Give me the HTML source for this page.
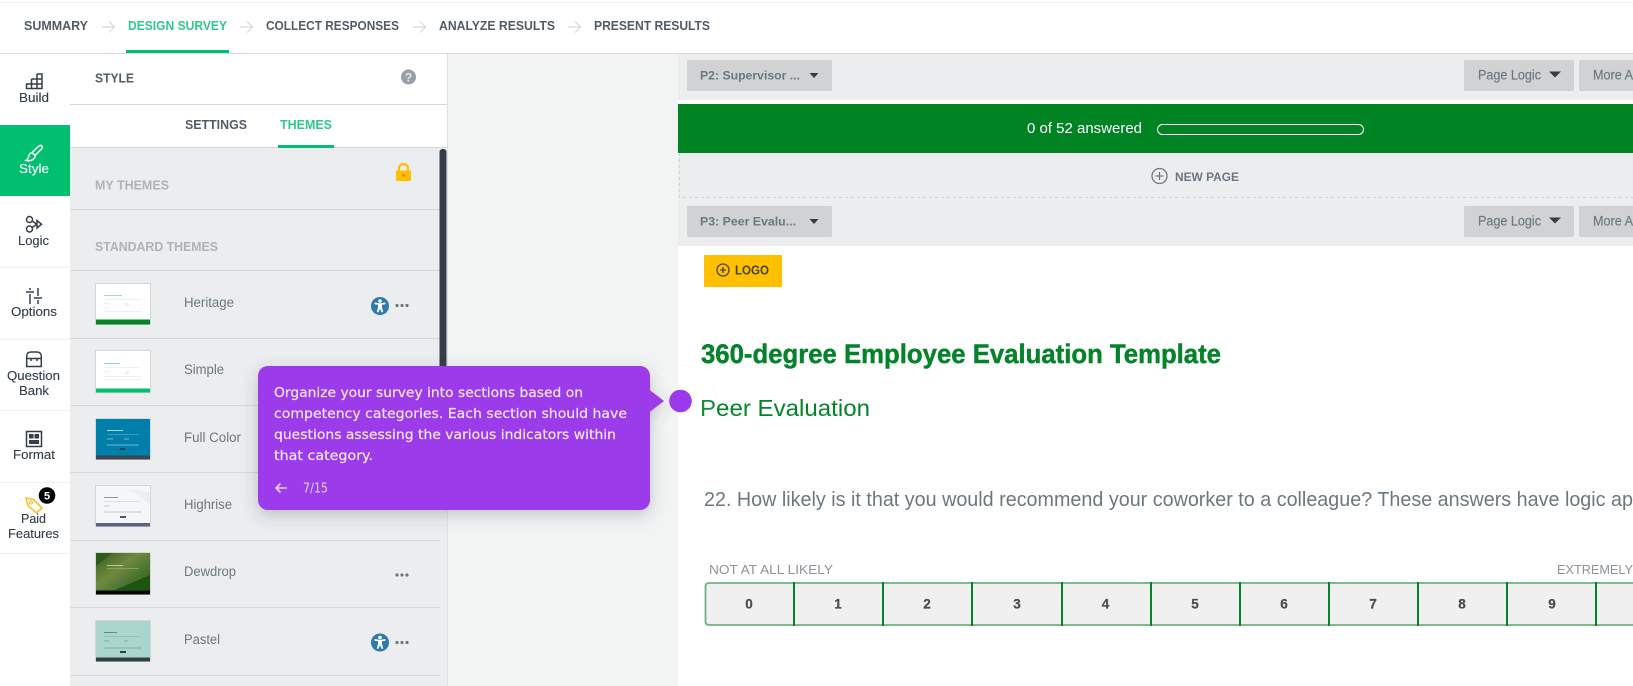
<!DOCTYPE html>
<html lang="en"><head><meta charset="utf-8"><title>Design Survey</title>
<style>
html,body{margin:0;padding:0;width:1633px;height:686px;overflow:hidden;background:#fff}
svg{display:block;filter:blur(.3px)}
text{font-family:"Liberation Sans",sans-serif}
.nav{font-size:13px;font-weight:700;fill:#515c66}
.g{fill:#2fc98a}
.side{font-size:12.5px;fill:#333e48;stroke:#333e48;stroke-width:.12}
.sec{font-size:13px;font-weight:700;fill:#b0b3b6}
.name{font-size:13.5px;fill:#6b787f}
.btn{font-size:12px;font-weight:700;fill:#6b787f}
.btn2{font-size:13.5px;fill:#6b787f;stroke:#6b787f;stroke-width:.15}
.tip{font-family:"DejaVu Sans",sans-serif;font-size:13px;fill:#f3e9fc;stroke:#f3e9fc;stroke-width:.18}
.num{font-size:13.5px;font-weight:700;fill:#4b4f52;text-anchor:middle;stroke:#4b4f52;stroke-width:.25}
.ic{fill:none;stroke:#333e48;stroke-width:1.5}
.arr{fill:none;stroke:#d8dada;stroke-width:1.2}
</style></head><body>
<svg width="1633" height="686" viewBox="0 0 1633 686" xmlns="http://www.w3.org/2000/svg">
<defs>
<filter id="sh" x="-15%" y="-25%" width="130%" height="160%"><feDropShadow dx="0" dy="5" stdDeviation="8" flood-color="#3a4060" flood-opacity=".28"/></filter>
<linearGradient id="dew" x1="0" y1="0" x2="1" y2="1"><stop offset="0" stop-color="#33591f"/><stop offset=".4" stop-color="#6f8a3e"/><stop offset=".7" stop-color="#44702a"/><stop offset="1" stop-color="#1f5a14"/></linearGradient>
<g id="acc"><circle r="9" fill="#2b7aab"/><circle cy="-5" r="1.8" fill="#fff"/><path d="M-5.5-2.6 0-1.8 5.5-2.6" fill="none" stroke="#fff" stroke-width="1.7"/><path d="M-2-2.200H2V1.500L3.300 6.300H1.500L0 2.500-1.500 6.300H-3.300L-2 1.500Z" fill="#fff"/></g>
<g id="dots" fill="#6b787f"><circle cx="-5" r="1.6"/><circle r="1.6"/><circle cx="5" r="1.6"/></g>
</defs>

<!-- top nav -->
<rect width="1633" height="686" fill="#fff"/>
<rect y="2" width="1633" height="1" fill="#efefef"/>
<rect y="53" width="1633" height="1" fill="#d6d8d9"/>
<text class="nav" x="24" y="30" textLength="64" lengthAdjust="spacingAndGlyphs">SUMMARY</text>
<path class="arr" d="M102 27H114M109 21.5 114.5 27 109 32.5"/>
<text class="nav g" x="128" y="30" textLength="99" lengthAdjust="spacingAndGlyphs">DESIGN SURVEY</text>
<rect x="126" y="50" width="103" height="3" fill="#00bf6f"/>
<path class="arr" d="M240 27H252M247 21.5 252.500 27 247 32.5"/>
<text class="nav" x="266" y="30" textLength="133" lengthAdjust="spacingAndGlyphs">COLLECT RESPONSES</text>
<path class="arr" d="M413 27H425M420 21.5 425.500 27 420 32.5"/>
<text class="nav" x="439" y="30" textLength="116" lengthAdjust="spacingAndGlyphs">ANALYZE RESULTS</text>
<path class="arr" d="M568 27H580M575 21.5 580.500 27 575 32.5"/>
<text class="nav" x="594" y="30" textLength="116" lengthAdjust="spacingAndGlyphs">PRESENT RESULTS</text>

<!-- backgrounds -->
<rect x="447" y="54" width="231" height="632" fill="#f2f4f4"/>
<rect x="70" y="148" width="377" height="538" fill="#ecedee"/>
<rect x="447" y="54" width="1" height="632" fill="#dfe1e2"/>
<rect x="70" y="104" width="377" height="1" fill="#d6d8d9"/>
<rect x="70" y="147" width="377" height="1" fill="#d6d8d9"/>

<!-- sidebar -->
<rect x="0" y="125" width="70" height="71" fill="#00bf6f"/>
<g fill="#f1f2f2"><rect y="267" width="70" height="1"/><rect y="339" width="70" height="1"/><rect y="410" width="70" height="1"/><rect y="482" width="70" height="1"/><rect y="553" width="70" height="1"/></g>
<path class="ic" d="M37 74H42V88.500H26.500V84H42M37 74V88.500M31.500 79H42M31.500 79V88.500M26.500 84V88.500"/>
<text class="side" x="19" y="102" textLength="30" lengthAdjust="spacingAndGlyphs">Build</text>
<path fill="none" stroke="#fff" stroke-width="1.5" d="M32 152.500 39 146Q41 144.800 42 146.200 42.800 147.500 41.500 149L35 155.500ZM32 152.500Q28.800 153.500 28.500 157 28.200 159 26 160.500 31.500 161.500 34 158.500 35.500 157 35 155.500"/>
<text class="side" x="19" y="173" textLength="30" lengthAdjust="spacingAndGlyphs" style="fill:#fff;stroke:#fff">Style</text>
<g class="ic"><circle cx="29.500" cy="219.500" r="3"/><circle cx="29.500" cy="229" r="3"/><path d="M32 221 37 224.200M32 227.500 37 224.200"/><path d="M37 220.500 41.500 224.200 37 228Z"/></g>
<text class="side" x="18" y="245" textLength="31" lengthAdjust="spacingAndGlyphs">Logic</text>
<g class="ic"><path d="M30 288V290M30 294V304M26 292H34M38 288V296M38 300V304M34 298H42"/></g>
<text class="side" x="11" y="316" textLength="46" lengthAdjust="spacingAndGlyphs">Options</text>
<g class="ic"><path d="M26.700 366.500V356.500Q26.700 352 31 352H37Q41.300 352 41.300 356.500V366.500ZM26.700 358.500H41.300M31 358.500V361M37 358.500V361"/></g>
<text class="side" x="7" y="380" textLength="53" lengthAdjust="spacingAndGlyphs">Question</text>
<text class="side" x="19" y="395" textLength="30" lengthAdjust="spacingAndGlyphs">Bank</text>
<rect class="ic" x="26.500" y="431.500" width="15" height="15"/><g fill="#333e48"><rect x="29" y="434" width="4.500" height="4.500"/><rect x="34.500" y="434" width="4.500" height="4.500"/><rect x="29" y="440" width="10" height="4"/></g>
<text class="side" x="13" y="459" textLength="42" lengthAdjust="spacingAndGlyphs">Format</text>
<path fill="none" stroke="#fdc030" stroke-width="1.6" d="M26 498 33.500 499.500 42 508 36.500 513 28 505.500Z"/><circle cx="31" cy="502.500" r="1.500" fill="none" stroke="#fdc030" stroke-width="1.200"/>
<circle cx="47" cy="495.500" r="8.300" fill="#000"/><text x="47" y="499.500" text-anchor="middle" style="font-size:11px;font-weight:700;fill:#fff">5</text>
<text class="side" x="21" y="523" textLength="25" lengthAdjust="spacingAndGlyphs">Paid</text>
<text class="side" x="8" y="538" textLength="51" lengthAdjust="spacingAndGlyphs">Features</text>

<!-- style panel -->
<text class="nav" x="95" y="82.500" textLength="39" lengthAdjust="spacingAndGlyphs" style="font-size:12.500px">STYLE</text>
<circle cx="408.500" cy="77" r="7.500" fill="#98a0a5"/><text x="408.500" y="81.500" text-anchor="middle" style="font-size:12px;font-weight:700;fill:#e8eaeb">?</text>
<text class="nav" x="185" y="129" textLength="62" lengthAdjust="spacingAndGlyphs">SETTINGS</text>
<text class="nav g" x="280" y="129" textLength="52" lengthAdjust="spacingAndGlyphs">THEMES</text>
<rect x="278" y="145" width="56" height="3" fill="#00bf6f"/>
<text class="sec" x="95" y="189.500" textLength="74" lengthAdjust="spacingAndGlyphs">MY THEMES</text>
<path d="M399 171V168.500A4.500 4.500 0 0 1 408 168.500V171" fill="none" stroke="#ffbf00" stroke-width="2.200"/><rect x="396" y="170.500" width="15" height="10.500" rx="1" fill="#ffbf00"/><circle cx="403.500" cy="175.500" r="1.300" fill="#c79500"/>
<rect x="70" y="209" width="370" height="1" fill="#d6d8d9"/>
<text class="sec" x="95" y="251" textLength="123" lengthAdjust="spacingAndGlyphs">STANDARD THEMES</text>
<g fill="#d6d8d9"><rect x="70" y="270" width="370" height="1"/><rect x="70" y="338" width="370" height="1"/><rect x="70" y="405" width="370" height="1"/><rect x="70" y="472" width="370" height="1"/><rect x="70" y="540" width="370" height="1"/><rect x="70" y="607" width="370" height="1"/><rect x="70" y="675" width="370" height="1"/></g>

<!-- thumbs -->
<g stroke="#d4d6d7" stroke-width="1">
<rect x="95.500" y="283.500" width="55" height="41" fill="#fff"/>
<rect x="95.500" y="350.500" width="55" height="42" fill="#fff"/>
<rect x="95.500" y="418.500" width="55" height="41" fill="#007faa"/>
<rect x="95.500" y="485.500" width="55" height="41" fill="#f5f6f7"/>
<rect x="95.500" y="552.500" width="55" height="42" fill="url(#dew)"/>
<rect x="95.500" y="620.500" width="55" height="41" fill="#a9d5cd"/>
</g>
<rect x="96" y="319.500" width="54" height="5" fill="#05832a"/>
<rect x="104" y="295" width="18" height="1" fill="#a8dcb6"/><g fill="#eff0f1"><rect x="104" y="299" width="36" height="1"/><rect x="104" y="303" width="6" height="1"/><rect x="104" y="307" width="6" height="1"/><rect x="125" y="303" width="4" height="3"/><rect x="104" y="311" width="38" height="1"/></g>
<rect x="96" y="388.500" width="54" height="4" fill="#00bf6f"/>
<rect x="104" y="363" width="16" height="1" fill="#8fe0bd"/><g fill="#eff0f1"><rect x="104" y="367" width="36" height="1"/><rect x="104" y="371" width="6" height="1"/><rect x="125" y="371" width="4" height="3"/><rect x="104" y="376" width="38" height="1"/><rect x="104" y="379" width="38" height="1"/></g>
<rect x="96" y="455.500" width="54" height="4" fill="#3c4650"/>
<rect x="107" y="430" width="16" height="1" fill="#a9d4e4"/><g fill="#3a9abe"><rect x="107" y="434" width="32" height="1"/><rect x="107" y="438" width="6" height="2"/><rect x="124" y="438" width="5" height="2"/><rect x="107" y="444" width="32" height="2"/></g><rect x="120" y="448" width="5" height="2" fill="#24404f"/>
<rect x="96" y="523" width="54" height="3.500" fill="#5b6484"/>
<path d="M130 489 150 492V505Z" fill="#eceef0"/><rect x="104" y="497" width="14" height="1" fill="#8d94aa"/><g fill="#dcdfe2"><rect x="104" y="501" width="36" height="1"/><rect x="104" y="505" width="5" height="2"/><rect x="104" y="511" width="38" height="2"/></g><rect x="120" y="516" width="6" height="2" fill="#4b5478"/>
<rect x="96" y="590.500" width="54" height="4" fill="#050505"/>
<path d="M96 553H112L96 566Z" fill="#2f5a1e"/><path d="M150 575V590H115Z" fill="#1c5410"/><rect x="107" y="565" width="16" height="1" fill="#b9c78f"/><rect x="107" y="568" width="32" height="1" fill="#8b9e5e"/><rect x="118" y="580" width="5" height="2" fill="#6b5a8a"/>
<rect x="96" y="657.500" width="54" height="4" fill="#333e48"/>
<rect x="104" y="632" width="13" height="1" fill="#6b8a86"/><g fill="#93c2ba"><rect x="104" y="636" width="36" height="1"/><rect x="104" y="640" width="5" height="2"/><rect x="124" y="640" width="4" height="2"/><rect x="104" y="647" width="38" height="2"/></g><rect x="120" y="651" width="6" height="2" fill="#333e48"/>

<text class="name" x="184" y="307" textLength="50" lengthAdjust="spacingAndGlyphs">Heritage</text>
<text class="name" x="184" y="374" textLength="40" lengthAdjust="spacingAndGlyphs">Simple</text>
<text class="name" x="184" y="442" textLength="57" lengthAdjust="spacingAndGlyphs">Full Color</text>
<text class="name" x="184" y="509" textLength="48" lengthAdjust="spacingAndGlyphs">Highrise</text>
<text class="name" x="184" y="576" textLength="52" lengthAdjust="spacingAndGlyphs">Dewdrop</text>
<text class="name" x="184" y="644" textLength="36" lengthAdjust="spacingAndGlyphs">Pastel</text>
<use href="#acc" x="380" y="306"/><use href="#dots" x="402" y="305.500"/>
<use href="#dots" x="402" y="575"/>
<use href="#acc" x="380" y="642.500"/><use href="#dots" x="402" y="642.500"/>

<!-- scrollbar -->
<rect x="439.500" y="149" width="7" height="225" rx="3" fill="#333e48"/>

<!-- right survey -->
<rect x="678" y="54" width="955" height="632" fill="#fff"/>
<rect x="678" y="54" width="955" height="46" fill="#ecedee"/>
<rect x="678" y="104" width="955" height="49" fill="#008323"/>
<rect x="678" y="153" width="955" height="93" fill="#ecedee"/>
<path d="M679.500 153V197.500H1633" fill="none" stroke="#d0d2d3" stroke-dasharray="3 3"/>
<rect x="687" y="60" width="145" height="31" rx="2" fill="#d0d2d3"/>
<rect x="687" y="206" width="145" height="31" rx="2" fill="#d0d2d3"/>
<text class="btn" x="700" y="79.500" textLength="100" lengthAdjust="spacingAndGlyphs">P2: Supervisor ...</text>
<text class="btn" x="700" y="225.500" textLength="96" lengthAdjust="spacingAndGlyphs">P3: Peer Evalu...</text>
<path d="M809.500 73H818.500L814 78Z" fill="#333e48"/><path d="M809.500 219H818.500L814 224Z" fill="#333e48"/>
<g fill="#d0d2d3"><rect x="1464" y="60" width="110" height="31" rx="2"/><rect x="1579" y="60" width="60" height="31" rx="2"/><rect x="1464" y="206" width="110" height="31" rx="2"/><rect x="1579" y="206" width="60" height="31" rx="2"/></g>
<text class="btn2" x="1478" y="79.500" textLength="63" lengthAdjust="spacingAndGlyphs">Page Logic</text>
<text class="btn2" x="1593" y="79.500" textLength="40" lengthAdjust="spacingAndGlyphs">More A</text>
<text class="btn2" x="1478" y="225.500" textLength="63" lengthAdjust="spacingAndGlyphs">Page Logic</text>
<text class="btn2" x="1593" y="225.500" textLength="40" lengthAdjust="spacingAndGlyphs">More A</text>
<path d="M1549 71.500H1561L1555 77.500Z" fill="#333e48"/><path d="M1549 217.500H1561L1555 223.500Z" fill="#333e48"/>
<text x="1027" y="133" textLength="115" lengthAdjust="spacingAndGlyphs" style="font-size:14.500px;fill:#fff">0 of 52 answered</text>
<rect x="1157.500" y="124.500" width="206" height="10" rx="5" fill="none" stroke="#fff" stroke-width="1"/>
<circle cx="1159.500" cy="176" r="7.500" fill="none" stroke="#6b787f" stroke-width="1.300"/><path d="M1159.500 172V180M1155.500 176H1163.500" stroke="#6b787f" stroke-width="1.300"/>
<text class="btn" x="1175" y="181" textLength="64" lengthAdjust="spacingAndGlyphs" style="font-weight:700">NEW PAGE</text>
<rect x="704" y="255" width="78" height="32" rx="1" fill="#ffc000"/>
<circle cx="723" cy="270" r="6" fill="none" stroke="#4a4320" stroke-width="1.300"/><path d="M723 267V273M720 270H726" stroke="#4a4320" stroke-width="1.300"/>
<text x="735" y="274.700" textLength="34" lengthAdjust="spacingAndGlyphs" style="font-size:12.500px;font-weight:700;fill:#4a4320">LOGO</text>
<text x="701" y="363" textLength="520" lengthAdjust="spacingAndGlyphs" style="font-size:27px;font-weight:700;fill:#05832a;stroke:#05832a;stroke-width:.45">360-degree Employee Evaluation Template</text>
<text x="700" y="416" textLength="170" lengthAdjust="spacingAndGlyphs" style="font-size:23px;fill:#05832a">Peer Evaluation</text>
<text x="704" y="506" textLength="929" lengthAdjust="spacingAndGlyphs" style="font-size:20px;fill:#6b787f">22. How likely is it that you would recommend your coworker to a colleague? These answers have logic ap</text>
<text x="709" y="574" textLength="124" lengthAdjust="spacingAndGlyphs" style="font-size:12.500px;fill:#8d9398">NOT AT ALL LIKELY</text>
<text x="1557" y="574" textLength="76" lengthAdjust="spacingAndGlyphs" style="font-size:12.500px;fill:#8d9398">EXTREMELY</text>
<path d="M1640 583H709Q705.500 583 705.500 586.500V621.500Q705.500 625 709 625H1640V583Z" fill="#f0f0f0" stroke="#6db37f" stroke-width="1.800"/>
<g fill="#05832a"><rect x="793" y="582" width="2" height="44"/><rect x="882" y="582" width="2" height="44"/><rect x="971" y="582" width="2" height="44"/><rect x="1061" y="582" width="2" height="44"/><rect x="1150" y="582" width="2" height="44"/><rect x="1239" y="582" width="2" height="44"/><rect x="1328" y="582" width="2" height="44"/><rect x="1417" y="582" width="2" height="44"/><rect x="1506" y="582" width="2" height="44"/><rect x="1595" y="582" width="2" height="44"/></g>
<text class="num" x="749" y="608.500">0</text><text class="num" x="838" y="608.500">1</text><text class="num" x="927" y="608.500">2</text><text class="num" x="1017" y="608.500">3</text><text class="num" x="1105.500" y="608.500">4</text><text class="num" x="1195" y="608.500">5</text><text class="num" x="1284" y="608.500">6</text><text class="num" x="1373" y="608.500">7</text><text class="num" x="1462" y="608.500">8</text><text class="num" x="1552" y="608.500">9</text>

<!-- tooltip -->
<circle cx="680" cy="401" r="36" fill="#fff" fill-opacity=".08" stroke="#eeeeef" stroke-opacity=".25"/>
<g filter="url(#sh)"><rect x="258" y="366" width="392" height="144" rx="10" fill="#9b3aea"/><path d="M649 389.500 664 401 649 412.500Z" fill="#9b3aea"/></g>
<circle cx="680.500" cy="401" r="11.300" fill="#9b3aea"/>
<text class="tip" x="274" y="397" textLength="309" lengthAdjust="spacingAndGlyphs">Organize your survey into sections based on</text>
<text class="tip" x="274" y="418" textLength="353" lengthAdjust="spacingAndGlyphs">competency categories. Each section should have</text>
<text class="tip" x="274" y="439" textLength="342" lengthAdjust="spacingAndGlyphs">questions assessing the various indicators within</text>
<text class="tip" x="274" y="460" textLength="99" lengthAdjust="spacingAndGlyphs">that category.</text>
<path d="M287 488H276M280.500 483.500 276 488 280.500 492.500" fill="none" stroke="#e6d3f7" stroke-width="1.600"/>
<text class="tip" x="303" y="492.500" textLength="25" lengthAdjust="spacingAndGlyphs" style="fill:#e2cff6;stroke:none">7/15</text>
</svg>
</body></html>
